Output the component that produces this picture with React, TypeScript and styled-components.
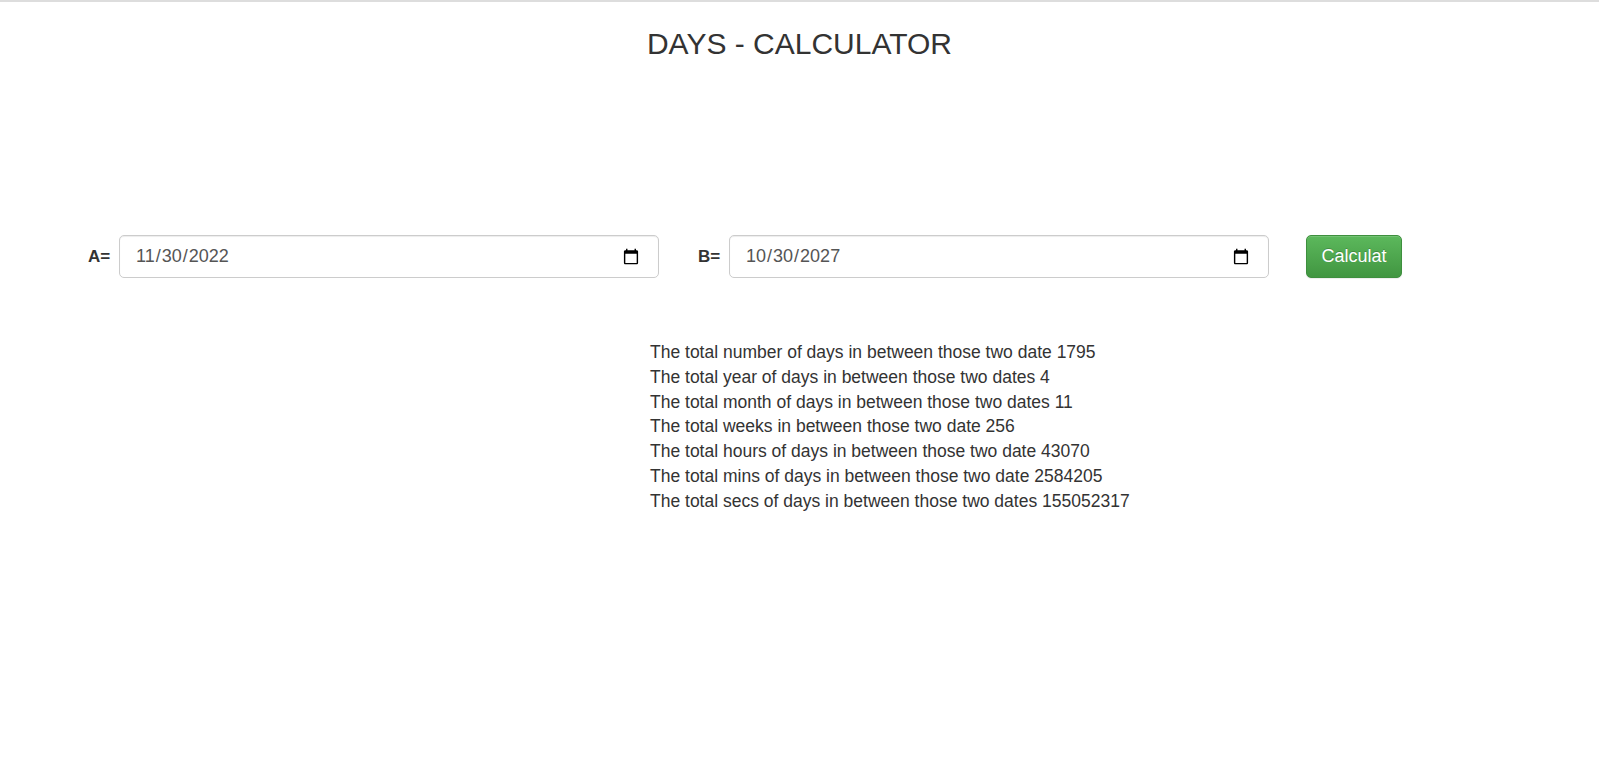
import React, { useState } from "react";
import styled, { createGlobalStyle } from "styled-components";

const GlobalStyle = createGlobalStyle`
  html, body {
    margin: 0;
    padding: 0;
    background: #ffffff;
  }
  body {
    font-family: "Liberation Sans", Arial, Helvetica, sans-serif;
    color: #333333;
    font-size: 14px;
  }
`;

const Page = styled.div`
  min-height: 762px;
  border-top: 2px solid #dddddd;
  box-sizing: border-box;
`;

const Title = styled.h2`
  margin: 25px 0 0;
  text-align: center;
  font-weight: 400;
  font-size: 30px;
  line-height: 33px;
  color: #333333;
`;

const FormRow = styled.div`
  display: flex;
  align-items: center;
  margin-top: 175px;
  padding-left: 88px;
`;

const Field = styled.div<{ $gapAfter: number }>`
  display: flex;
  align-items: center;
  gap: 8px;
  margin-right: ${(p) => p.$gapAfter}px;
`;

const Label = styled.label`
  font-weight: 700;
  font-size: 17px;
  color: #333333;
  width: 23px;
`;

const DateInput = styled.input`
  box-sizing: border-box;
  width: 540px;
  height: 43px;
  padding: 0 16px 0 15px;
  font-family: "Liberation Sans", Arial, Helvetica, sans-serif;
  font-size: 18px;
  color: #555555;
  background: #ffffff;
  border: 1px solid #cccccc;
  border-radius: 5px;
  box-shadow: inset 0 1px 1px rgba(0, 0, 0, 0.075);
  outline: none;

  &::-webkit-calendar-picker-indicator {
    margin-right: 0;
  }
`;

const CalcButton = styled.button`
  box-sizing: border-box;
  width: 96px;
  height: 43px;
  padding: 0 14px;
  font-family: "Liberation Sans", Arial, Helvetica, sans-serif;
  font-size: 18px;
  color: #ffffff;
  background-image: linear-gradient(to bottom, #5cb85c 0%, #419641 100%);
  border: 1px solid #3e8f3e;
  border-radius: 5px;
  text-shadow: 0 -1px 0 rgba(0, 0, 0, 0.2);
  box-shadow: inset 0 1px 0 rgba(255, 255, 255, 0.15),
    0 1px 1px rgba(0, 0, 0, 0.075);
  cursor: pointer;
`;

const Results = styled.div`
  margin-top: 62px;
  padding-left: 650px;
`;

const ResultLine = styled.div`
  font-size: 17.5px;
  line-height: 24.8px;
  color: #333333;
  white-space: nowrap;
`;

const lines = [
  "The total number of days in between those two date 1795",
  "The total year of days in between those two dates 4",
  "The total month of days in between those two dates 11",
  "The total weeks in between those two date 256",
  "The total hours of days in between those two date 43070",
  "The total mins of days in between those two date 2584205",
  "The total secs of days in between those two dates 155052317",
];

export default function App() {
  const [a, setA] = useState("2022-11-30");
  const [b, setB] = useState("2027-10-30");
  return (
    <Page>
      <GlobalStyle />
      <Title>DAYS - CALCULATOR</Title>
      <FormRow>
        <Field $gapAfter={39}>
          <Label htmlFor="dateA">A=</Label>
          <DateInput
            id="dateA"
            type="date"
            value={a}
            onChange={(e) => setA(e.target.value)}
          />
        </Field>
        <Field $gapAfter={37}>
          <Label htmlFor="dateB">B=</Label>
          <DateInput
            id="dateB"
            type="date"
            value={b}
            onChange={(e) => setB(e.target.value)}
          />
        </Field>
        <CalcButton type="button">Calculat</CalcButton>
      </FormRow>
      <Results>
        {lines.map((l) => (
          <ResultLine key={l}>{l}</ResultLine>
        ))}
      </Results>
    </Page>
  );
}
